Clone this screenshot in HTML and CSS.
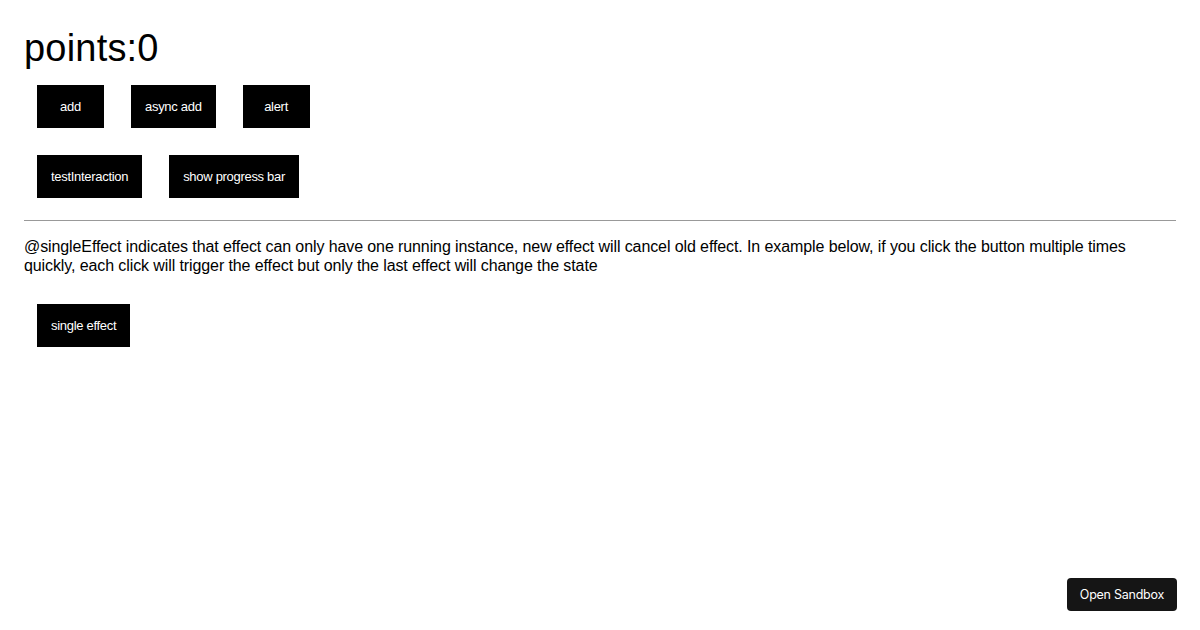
FILE: index.html
```html
<!DOCTYPE html>
<html>
<head>
<meta charset="utf-8">
<link rel="stylesheet" href="styles.css">
</head>
<body>
<div class="page">
  <h1 class="points">points:0</h1>
  <div class="controls">
    <div class="row">
      <button class="btn">add</button>
      <button class="btn">async add</button>
      <button class="btn">alert</button>
    </div>
    <div class="row">
      <button class="btn">testInteraction</button>
      <button class="btn">show progress bar</button>
    </div>
  </div>
  <hr class="divider">
  <p class="desc">@singleEffect indicates that effect can only have one running instance, new effect will cancel old effect. In example below, if you click the button multiple times quickly, each click will trigger the effect but only the last effect will change the state</p>
  <div class="controls">
    <div class="row">
      <button class="btn">single effect</button>
    </div>
  </div>
</div>
<a class="sandbox">Open Sandbox</a>
</body>
</html>
```

FILE: styles.css
```css
html, body {
  margin: 0;
  padding: 0;
  background: #fff;
}
body {
  font-family: "Liberation Sans", Arial, sans-serif;
  color: #000;
}
.page {
  padding: 24px;
}
.points {
  margin: 0;
  font-size: 38px;
  font-weight: normal;
  line-height: 48px;
  letter-spacing: 0.2px;
}
.controls {
  display: flex;
  flex-direction: column;
  gap: 27px;
  padding: 13px;
}
.row {
  display: flex;
  gap: 27px;
}
.btn {
  background: #000;
  color: #fff;
  border: none;
  font-family: "Liberation Sans", Arial, sans-serif;
  font-size: 13px;
  line-height: 15px;
  letter-spacing: -0.3px;
  padding: 14px 14px;
  min-width: 67px;
}
.divider {
  margin: 9px 0 0;
  border: none;
  border-top: 1px solid #999;
  height: 0;
}
.desc {
  margin: 16px 0 16px;
  font-size: 16px;
  line-height: 19px;
  letter-spacing: -0.1px;
}
.sandbox {
  position: fixed;
  right: 23px;
  bottom: 19px;
  background: #151515;
  color: #fff;
  font-family: Inter, "Liberation Sans", sans-serif;
  font-size: 12.5px;
  letter-spacing: -0.25px;
  line-height: 17px;
  padding: 8px 13px;
  border-radius: 4px;
}
```
